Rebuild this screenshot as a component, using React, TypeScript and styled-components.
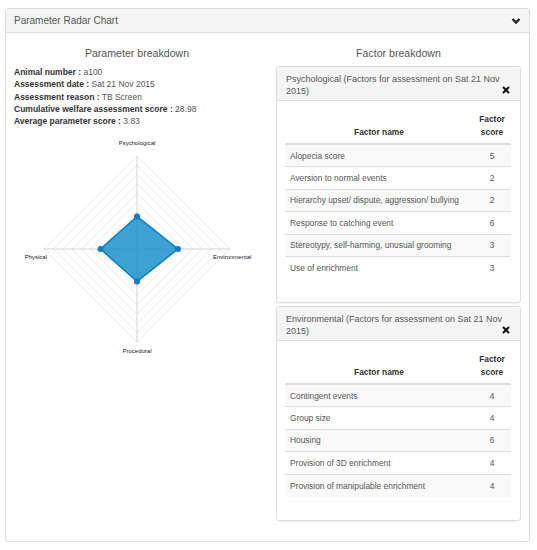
import React from "react";
import styled, { createGlobalStyle } from "styled-components";

const GlobalStyle = createGlobalStyle`
  html, body {
    margin: 0;
    padding: 0;
    background: #ffffff;
    font-family: "Liberation Sans", Arial, sans-serif;
    color: #333;
  }
`;

const Page = styled.div`
  padding: 8px 7px 0 5px;
  width: 537px;
  box-sizing: border-box;
`;

const Panel = styled.section`
  border: 1px solid #dddddd;
  border-radius: 3px;
  background: #ffffff;
  box-shadow: 0 1px 1px rgba(0, 0, 0, 0.05);
  height: 534px;
  box-sizing: border-box;
`;

const PanelHeading = styled.header`
  display: flex;
  align-items: center;
  justify-content: space-between;
  height: 23px;
  padding: 0 8px;
  background: #f5f5f5;
  border-bottom: 1px solid #dddddd;
  font-size: 10px;
  color: #555;
`;

const Body = styled.div`
  display: grid;
  grid-template-columns: 246px 245px;
  column-gap: 16px;
  padding: 13px 8px 0 8px;
`;

const Column = styled.div`
  display: flex;
  flex-direction: column;
`;

const ColumnTitle = styled.h3`
  margin: 0 0 6px;
  text-align: center;
  font-size: 10.6px;
  font-weight: normal;
  color: #555;
  line-height: 14px;
`;

const InfoLine = styled.div`
  font-size: 8.5px;
  line-height: 12.3px;
  color: #555;
  b {
    color: #333;
  }
`;

const Chart = styled.svg`
  display: block;
  margin-top: 7px;
`;

const FactorPanel = styled.div<{ $h: number }>`
  border: 1px solid #dddddd;
  border-radius: 3px;
  box-shadow: 0 1px 1px rgba(0, 0, 0, 0.05);
  margin-bottom: 3px;
  height: ${(p) => p.$h}px;
  box-sizing: border-box;
`;

const FactorHeading = styled.div`
  padding: 6px 8px 3px 9px;
  background: #f5f5f5;
  border-bottom: 1px solid #dddddd;
  font-size: 9px;
  line-height: 12px;
  color: #555;
`;

const CloseIcon = styled.svg`
  float: right;
  margin-top: 1px;
  margin-right: 2px;
`;

const FactorBody = styled.div`
  padding: 12px 9px 0 8px;
`;

const Table = styled.table`
  width: 100%;
  border-collapse: collapse;
  font-size: 8.4px;
  color: #555;
`;

const Th = styled.th<{ $narrow?: boolean }>`
  text-align: center;
  vertical-align: bottom;
  font-weight: bold;
  color: #333;
  line-height: 12.5px;
  padding: 0 5px 5px;
  border-bottom: 2px solid #dddddd;
  width: ${(p) => (p.$narrow ? "28px" : "auto")};
`;

const Tr = styled.tr`
  &:nth-child(odd) {
    background: #f9f9f9;
  }
`;

const Td = styled.td<{ $center?: boolean }>`
  height: 22.5px;
  box-sizing: border-box;
  padding: 0 5px;
  border-top: 1px solid #dddddd;
  color: #555;
  text-align: ${(p) => (p.$center ? "center" : "left")};
  vertical-align: middle;
`;

type Factor = [string, number];

const psychological: Factor[] = [
  ["Alopecia score", 5],
  ["Aversion to normal events", 2],
  ["Hierarchy upset/ dispute, aggression/ bullying", 2],
  ["Response to catching event", 6],
  ["Stereotypy, self-harming, unusual grooming", 3],
  ["Use of enrichment", 3],
];

const environmental: Factor[] = [
  ["Contingent events", 4],
  ["Group size", 4],
  ["Housing", 6],
  ["Provision of 3D enrichment", 4],
  ["Provision of manipulable enrichment", 4],
];

const Chevron = () => (
  <svg width="10" height="8" viewBox="0 0 10 8">
    <path d="M1.5 2 L5 5.5 L8.5 2" fill="none" stroke="#222" strokeWidth="2.4" />
  </svg>
);

const Close = () => (
  <CloseIcon width="8" height="8" viewBox="0 0 8 8">
    <path d="M1 1 L7 7 M7 1 L1 7" stroke="#111" strokeWidth="2" />
  </CloseIcon>
);

const Radar = () => {
  const cx = 123;
  const cy = 115;
  const R = 93;
  const values = [3.5, 4.4, 3.5, 3.92]; // top, right, bottom, left
  const diamond = (r: number) =>
    `${cx},${cy - r} ${cx + r},${cy} ${cx},${cy + r} ${cx - r},${cy}`;
  const pts = [
    [cx, cy - (values[0] / 10) * R],
    [cx + (values[1] / 10) * R, cy],
    [cx, cy + (values[2] / 10) * R],
    [cx - (values[3] / 10) * R, cy],
  ];
  return (
    <Chart width="246" height="230" viewBox="0 0 246 230">
      {Array.from({ length: 10 }, (_, i) => (
        <polygon
          key={i}
          points={diamond(((i + 1) / 10) * R)}
          fill="none"
          stroke="#e2e2e2"
          strokeWidth="0.8"
        />
      ))}
      <line x1={cx} y1={cy - R} x2={cx} y2={cy + R} stroke="#c8c8c8" strokeWidth="0.8" />
      <line x1={cx - R} y1={cy} x2={cx + R} y2={cy} stroke="#c8c8c8" strokeWidth="0.8" />
      <polygon
        points={pts.map((p) => p.join(",")).join(" ")}
        fill="rgba(28, 145, 205, 0.85)"
        stroke="#0b7dc2"
        strokeWidth="1.5"
      />
      {pts.map(([x, y], i) => (
        <circle key={i} cx={x} cy={y} r="3" fill="#0b7dc2" />
      ))}
      <g fontFamily="'Liberation Sans', Arial, sans-serif" fontSize="6" fill="#222">
        <text x={cx} y="11" textAnchor="middle">Psychological</text>
        <text x={cx} y="219" textAnchor="middle">Procedural</text>
        <text x="33" y="125" textAnchor="end">Physical</text>
        <text x="199" y="125" textAnchor="start">Environmental</text>
      </g>
    </Chart>
  );
};

const FactorTable = ({ rows }: { rows: Factor[] }) => (
  <Table>
    <thead>
      <tr>
        <Th>Factor name</Th>
        <Th $narrow>
          Factor
          <br />
          score
        </Th>
      </tr>
    </thead>
    <tbody>
      {rows.map(([name, score]) => (
        <Tr key={name}>
          <Td>{name}</Td>
          <Td $center>{score}</Td>
        </Tr>
      ))}
    </tbody>
  </Table>
);

export default function App() {
  return (
    <Page>
      <GlobalStyle />
      <Panel>
        <PanelHeading>
          <span>Parameter Radar Chart</span>
          <Chevron />
        </PanelHeading>
        <Body>
          <Column>
            <ColumnTitle>Parameter breakdown</ColumnTitle>
            <InfoLine>
              <b>Animal number :</b> a100
            </InfoLine>
            <InfoLine>
              <b>Assessment date :</b> Sat 21 Nov 2015
            </InfoLine>
            <InfoLine>
              <b>Assessment reason :</b> TB Screen
            </InfoLine>
            <InfoLine>
              <b>Cumulative welfare assessment score :</b> 28.98
            </InfoLine>
            <InfoLine>
              <b>Average parameter score :</b> 3.83
            </InfoLine>
            <Radar />
          </Column>
          <Column>
            <ColumnTitle>Factor breakdown</ColumnTitle>
            <FactorPanel $h={237}>
              <FactorHeading>
                Psychological (Factors for assessment on Sat 21 Nov 2015)
                <Close />
              </FactorHeading>
              <FactorBody>
                <FactorTable rows={psychological} />
              </FactorBody>
            </FactorPanel>
            <FactorPanel $h={215}>
              <FactorHeading>
                Environmental (Factors for assessment on Sat 21 Nov 2015)
                <Close />
              </FactorHeading>
              <FactorBody>
                <FactorTable rows={environmental} />
              </FactorBody>
            </FactorPanel>
          </Column>
        </Body>
      </Panel>
    </Page>
  );
}
